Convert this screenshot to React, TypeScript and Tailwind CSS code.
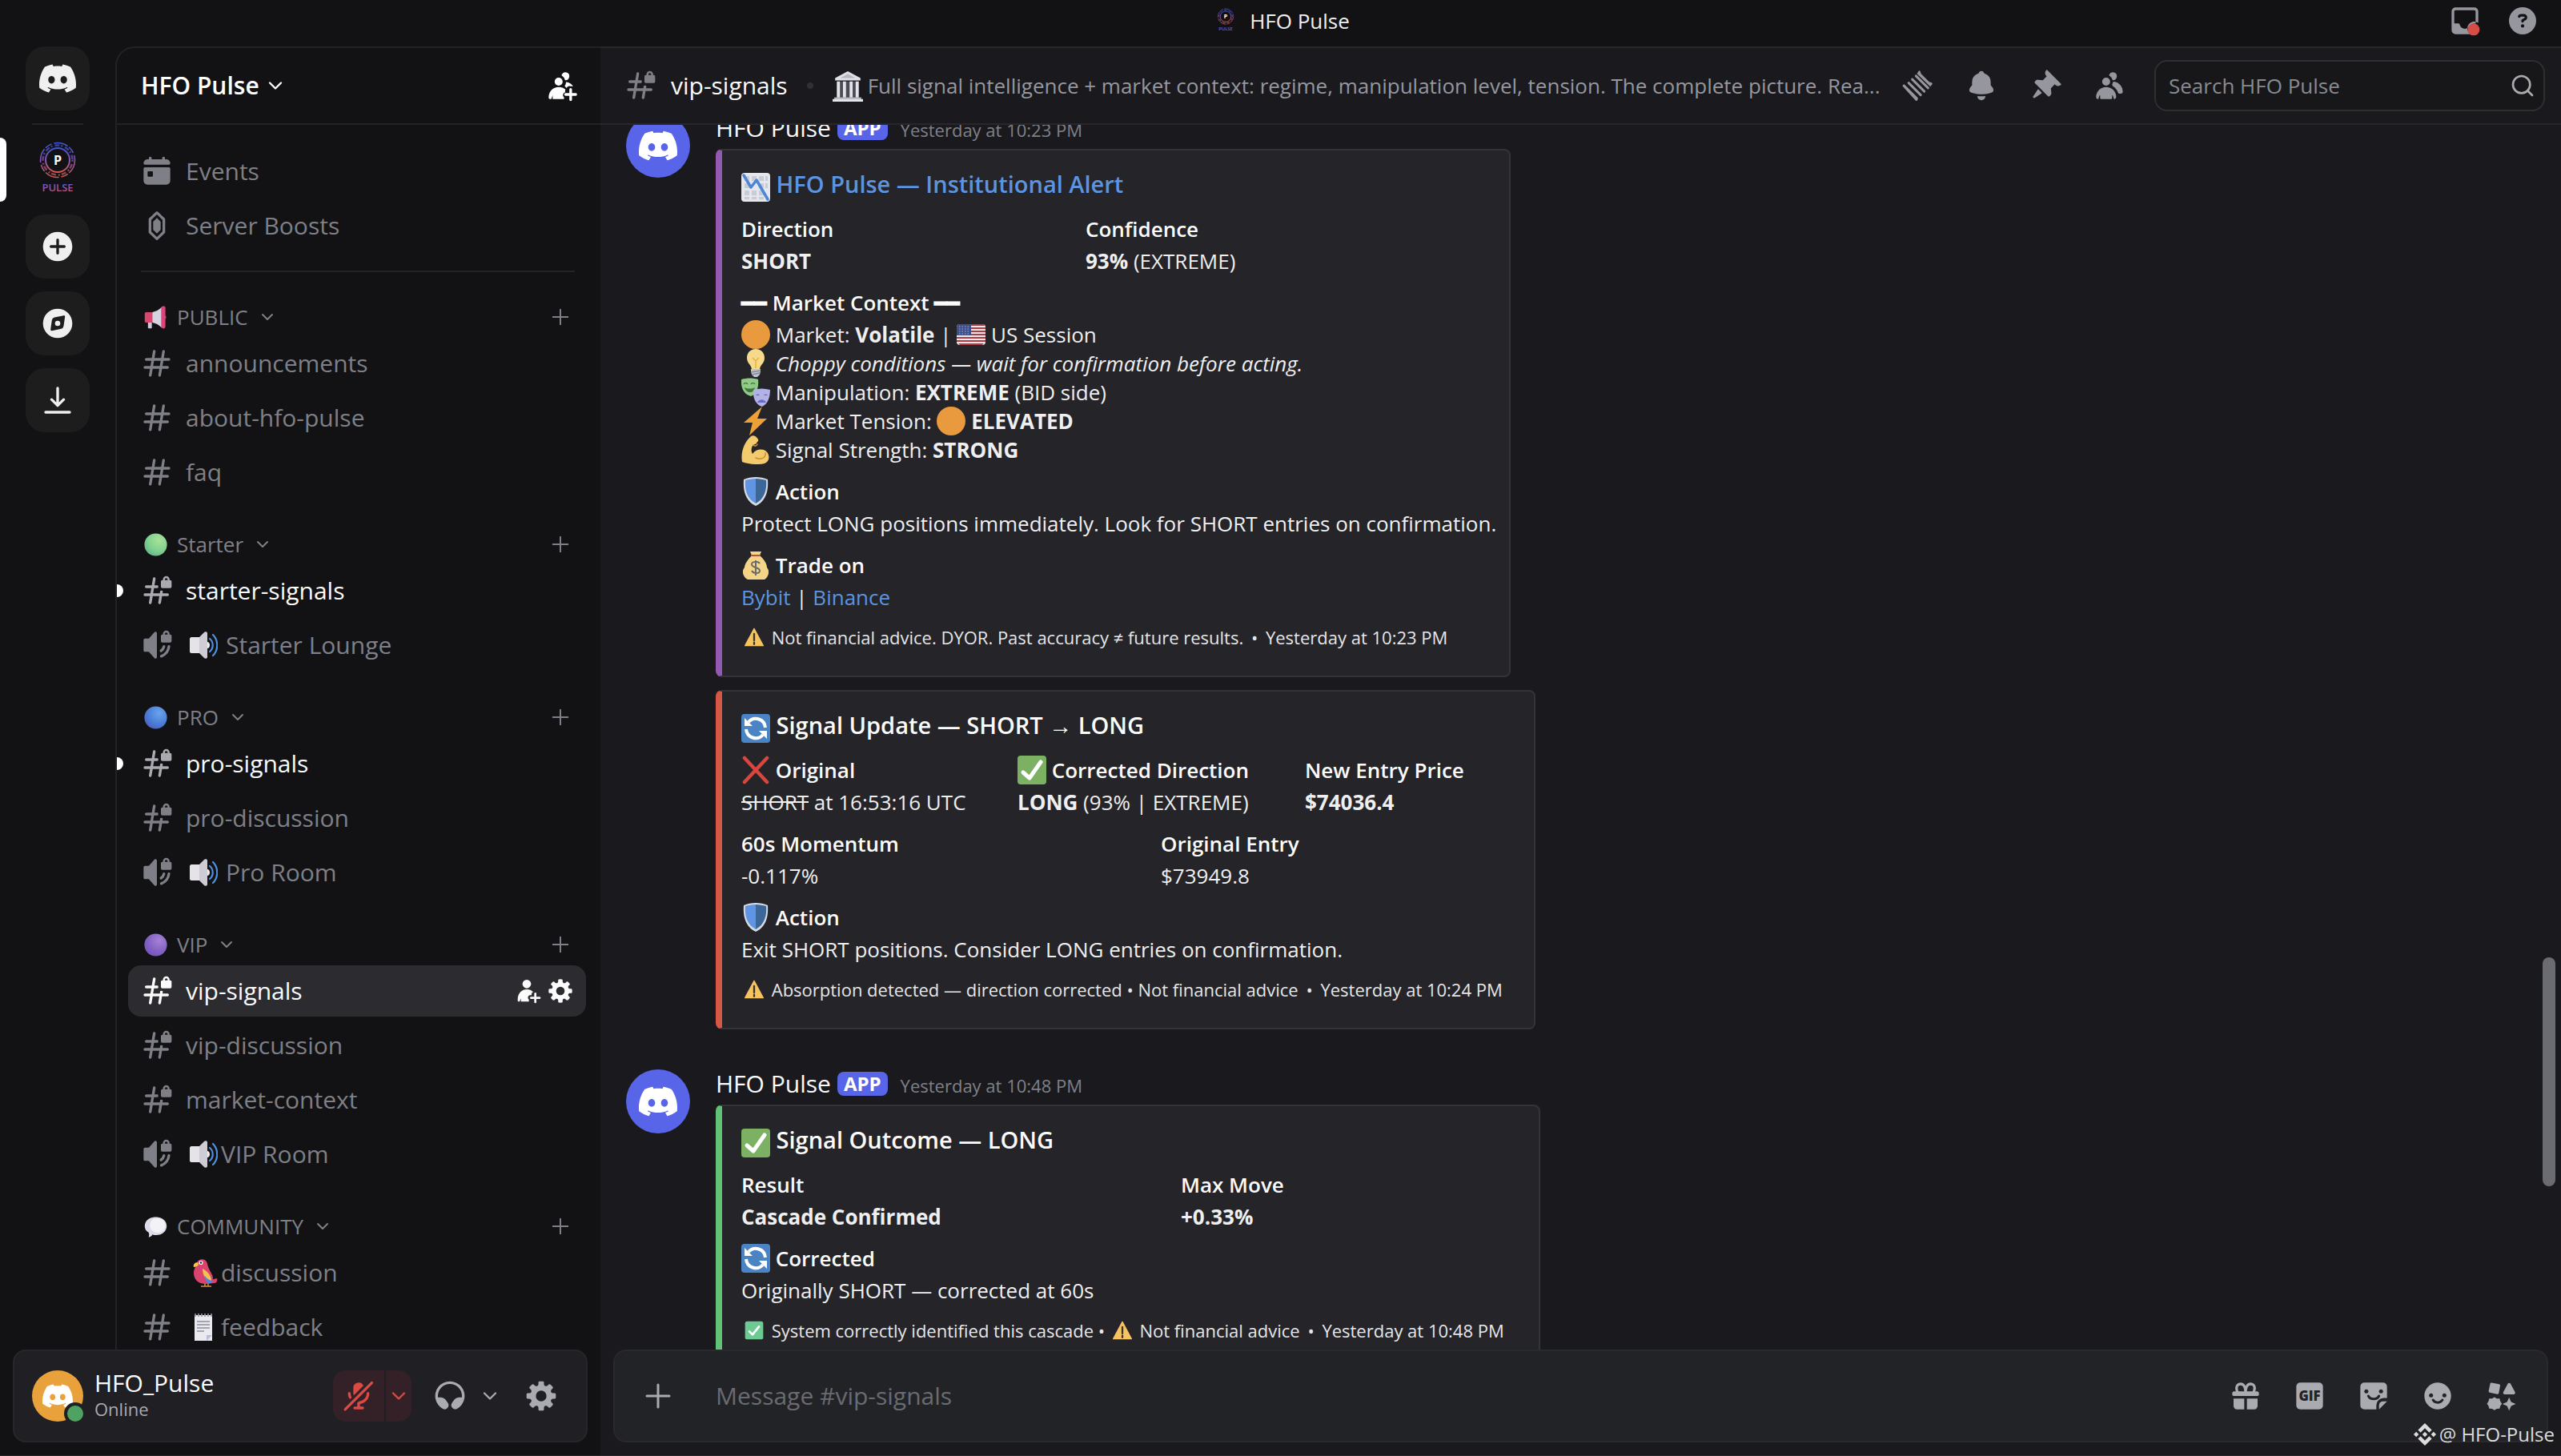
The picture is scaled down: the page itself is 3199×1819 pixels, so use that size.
import React from 'react';
import { FaCircleQuestion } from 'react-icons/fa6';
import { SiBinance, SiDiscord } from 'react-icons/si';
import { ChevronDown, Plus, Search } from 'lucide-react';

type EmojiName =
  | 'megaphone' | 'green' | 'blue' | 'purple' | 'orange' | 'bubble' | 'speaker' | 'parrot' | 'notepad'
  | 'temple' | 'chart' | 'flag' | 'bulb' | 'masks' | 'bolt' | 'muscle' | 'shield' | 'moneybag'
  | 'warning' | 'refresh' | 'cross' | 'check' | 'mint';

interface Channel {
  name: string;
  kind: 'hash' | 'lockedHash' | 'lockedVoice';
  emoji?: EmojiName;
  spaced?: boolean;
  unread?: boolean;
  active?: boolean;
}

interface Category {
  name: string;
  emoji: EmojiName;
  channels: Channel[];
}

const categories: Category[] = [
  {
    name: 'PUBLIC',
    emoji: 'megaphone',
    channels: [
      { name: 'announcements', kind: 'hash' },
      { name: 'about-hfo-pulse', kind: 'hash' },
      { name: 'faq', kind: 'hash' },
    ],
  },
  {
    name: 'Starter',
    emoji: 'green',
    channels: [
      { name: 'starter-signals', kind: 'lockedHash', unread: true },
      { name: 'Starter Lounge', kind: 'lockedVoice', emoji: 'speaker', spaced: true },
    ],
  },
  {
    name: 'PRO',
    emoji: 'blue',
    channels: [
      { name: 'pro-signals', kind: 'lockedHash', unread: true },
      { name: 'pro-discussion', kind: 'lockedHash' },
      { name: 'Pro Room', kind: 'lockedVoice', emoji: 'speaker', spaced: true },
    ],
  },
  {
    name: 'VIP',
    emoji: 'purple',
    channels: [
      { name: 'vip-signals', kind: 'lockedHash', active: true },
      { name: 'vip-discussion', kind: 'lockedHash' },
      { name: 'market-context', kind: 'lockedHash' },
      { name: 'VIP Room', kind: 'lockedVoice', emoji: 'speaker' },
    ],
  },
  {
    name: 'COMMUNITY',
    emoji: 'bubble',
    channels: [
      { name: 'discussion', kind: 'hash', emoji: 'parrot' },
      { name: 'feedback', kind: 'hash', emoji: 'notepad' },
    ],
  },
];

const ball = (id: string, light: string, mid: string, dark: string) => (
  <>
    <defs>
      <radialGradient id={id} cx="0.65" cy="0.3" r="0.8">
        <stop offset="0" stopColor={light} />
        <stop offset="0.6" stopColor={mid} />
        <stop offset="1" stopColor={dark} />
      </radialGradient>
    </defs>
    <circle cx="18" cy="18" r="17.5" fill={`url(#${id})`} />
  </>
);

const emojiArt: Record<EmojiName, React.ReactNode> = {
  green: ball('ball-green', '#a8e29a', '#7fd18f', '#5fb389'),
  blue: ball('ball-blue', '#6ba3ec', '#4a7fd8', '#4a5cc4'),
  purple: ball('ball-purple', '#a583d6', '#8462c4', '#7350c0'),
  orange: <circle cx="18" cy="18" r="18" fill="#ea9a3e" />,
  megaphone: (
    <>
      <path d="M32 15c3 0 3 6 0 6z" fill="#6b6780" />
      <path d="M6 22h6v12a1 1 0 0 1-1 1H7a1 1 0 0 1-1-1z" fill="#c9c6dc" />
      <rect x="1" y="10" width="13" height="16" rx="2" fill="#d8456f" />
      <path d="M13 10c5-1 11-4 14-8v32c-3-4-9-7-14-8z" fill="#d5d3e2" />
      <path d="M27 3c0-3 6-3 6 0v30c0 3-6 3-6 0z" fill="#e2427a" />
    </>
  ),
  bubble: (
    <>
      <path d="M18 3c10 0 17 6 17 14s-7 14-16 14c-2 0-4 0-6-1-1 2-3 4-6 4 1-2 1-5 0-7-4-2-6-6-6-10C1 9 8 3 18 3z" fill="#dcdcea" />
      <path d="M20 5c8 0 13 5 13 11s-5 11-12 11S9 22 9 16 13 5 20 5z" fill="#f3f3f7" />
    </>
  ),
  speaker: (
    <>
      <path d="M1 10c0-1 1-2 2-2h10v20H3c-1 0-2-1-2-2z" fill="#e6e3e8" />
      <path d="M13 8l6-6c1-1 4-1 4 1v30c0 2-3 2-4 1l-6-6z" fill="#cfccd6" />
      <path d="M23 14c4 0 4 8 0 8z" fill="#efeef2" />
      <path d="M26 10c5 4 5 12 0 16M30 5c7 7 7 19 0 26" fill="none" stroke="#4f8fe0" strokeWidth="2.2" strokeLinecap="round" />
    </>
  ),
  parrot: (
    <>
      <path d="M20 31v4M24 31v4M15 35h13" stroke="#d58a3a" strokeWidth="1.6" />
      <path d="M22 28l13-3c1 4-1 6-4 6l-9 1z" fill="#dd3f67" />
      <path d="M10 6c1-6 12-7 13 1 1 6 6 12 7 17 0 5-4 8-9 8C11 32 6 26 6 18c0-5 3-7 4-12z" fill="#d9446f" />
      <path d="M17 13c6 3 11 9 11 15-6 0-11-6-11-15z" fill="#f2c14f" />
      <path d="M20 22c3 4 6 6 10 6 0 2-3 4-6 3-3-2-4-5-4-9z" fill="#4a86dd" />
      <path d="M11 5c-4 0-6 3-5 6 2 0 5-1 6-3z" fill="#f4c54c" />
      <circle cx="15" cy="5.5" r="2.6" fill="#f7f0f4" />
      <circle cx="15" cy="5.5" r="1.2" fill="#222" />
    </>
  ),
  notepad: (
    <>
      <path d="M7 3h22v32H7z" fill="#e9e9ef" />
      <path d="M22 35v-7h7z" fill="#b9bcd6" />
      <path d="M8 1v4M12 1v4M16 1v4M20 1v4M24 1v4M28 1v4" stroke="#9a9aa4" strokeWidth="1.6" />
      <path d="M10 11h16M10 15h16M10 19h16M10 23h9" stroke="#8c8e9c" strokeWidth="1.3" />
    </>
  ),
  temple: (
    <>
      <path d="M18 0l15 8v3H3V8z" fill="#dfe1e6" />
      <path d="M18 3l9 5H9z" fill="#b4b8c2" />
      <path d="M5 12h4v19H5zM12 12h4v19h-4zM20 12h4v19h-4zM27 12h4v19h-4z" fill="#e3e4ea" />
      <path d="M9 12h3v19H9zM16 12h4v19h-4zM24 12h3v19h-3z" fill="#4a4b57" />
      <path d="M2 31h32v2H2z" fill="#c6c9d1" />
      <path d="M0 33h36v3H0z" fill="#e3e5ea" />
    </>
  ),
  chart: (
    <>
      <rect width="36" height="36" rx="4" fill="#e5e7ed" />
      <path d="M4 4h6v6H4zM13 4h6v6h-6zM22 4h6v6h-6zM30 4h3v6h-3zM4 13h6v6H4zM22 13h6v6h-6zM30 13h3v6h-3zM4 22h6v6H4zM13 22h6v6h-6zM22 22h6v6h-6zM4 30h6v3H4zM13 30h6v3h-6zM22 30h6v3h-6z" fill="#c8ccd6" />
      <path d="M3 3l9 15 7-9 14 24" fill="none" stroke="#4d86d6" strokeWidth="3.5" strokeLinejoin="round" strokeLinecap="round" />
    </>
  ),
  flag: (
    <>
      <rect y="5" width="36" height="26" rx="4" fill="#eceaea" />
      <path d="M2 5h32l1 2H1zM0 9h36v2H0zM0 13h36v2H0zM0 17h36v2H0zM0 21h36v2H0zM0 25h36v2H0zM2 29h32l-2 2H4z" fill="#b23a43" />
      <path d="M4 5h14v14H0V9a4 4 0 0 1 4-4z" fill="#3f4f8c" />
      <path d="M3 8h13M3 11h13M3 14h13M3 17h13" stroke="#a4aecb" strokeWidth="1.2" strokeDasharray="1.5 2" />
    </>
  ),
  bulb: (
    <>
      <path d="M18 0c7 0 11 5 11 11 0 7-5 8-6 14H13C12 19 7 18 7 11 7 5 11 0 18 0z" fill="#f7d98a" />
      <path d="M14 11l4 4 4-4M18 15v9" fill="none" stroke="#e9b23f" strokeWidth="1.5" />
      <path d="M12 25h12v3l-1 4-3 3h-4l-3-3-1-4z" fill="#bfc4cf" />
      <path d="M12 29l12-2M13 32l10-2" stroke="#858b99" strokeWidth="1.3" />
    </>
  ),
  masks: (
    <>
      <path d="M0 2c7-2 15-2 21 0 1 10-2 18-9 21C3 21-1 12 0 2z" fill="#8fcb86" />
      <path d="M3 8c1-2 4-2 5 0M12 8c1-2 4-2 5 0" fill="none" stroke="#4b7d47" strokeWidth="1.5" />
      <path d="M4 12c4 2 9 2 13 0-1 4-3 6-6 6s-6-2-7-6z" fill="#47713f" />
      <path d="M15 15c7-2 14-2 21 0 0 9-3 18-10 21-8-2-12-11-11-21z" fill="#b3b2e6" />
      <path d="M18 22c1-2 4-2 5 0M28 22c1-2 4-2 5 0M20 31c2-5 9-5 11 0z" fill="#6f6abf" />
    </>
  ),
  bolt: <path d="M26 0L3 20h11l-4 16 22-21H20z" fill="#eda036" />,
  muscle: (
    <>
      <path d="M12 1c3-2 7 0 9 4 1 3-2 3-2 5l-4 2c-3 3-3 8-1 11 5-7 15-7 19-1 3 6 1 11-4 13-8 2-20 1-28-2C-1 22 3 9 12 1z" fill="#f4cb6c" />
      <path d="M30 22c1 6-6 9-12 6M15 12c2 2 4 1 5-1" fill="none" stroke="#cf8e33" strokeWidth="1.6" strokeLinecap="round" />
    </>
  ),
  shield: (
    <>
      <path d="M18 0c5 0 11 1 15 3 1 14-2 27-15 33C5 30 2 17 3 3 7 1 13 0 18 0z" fill="#d6dae2" />
      <path d="M18 2v31C7 27 4 16 5 4c4-1 8-2 13-2z" fill="#5f95e2" />
      <path d="M18 2v31c11-6 14-17 13-29-4-1-8-2-13-2z" fill="#3c6799" />
    </>
  ),
  moneybag: (
    <>
      <path d="M11 1h14l-2 5c6 5 9 11 9 15 4 4 2 12-3 15H8C2 33 0 25 4 21c0-4 4-10 9-15z" fill="#f4d588" />
      <path d="M12 5h12v2H12z" fill="#b5503c" />
      <path d="M23 16c-2-3-10-3-10 1 0 5 10 3 10 8 0 4-8 4-10 0M18 12v19" fill="none" stroke="#6b6a6a" strokeWidth="2" />
    </>
  ),
  warning: (
    <>
      <path d="M18 2l17 32H1z" fill="#f5c35f" stroke="#f5c35f" strokeWidth="2" strokeLinejoin="round" />
      <path d="M18 12v12M18 28v3" stroke="#3a3328" strokeWidth="3.5" strokeLinecap="round" />
    </>
  ),
  refresh: (
    <>
      <rect width="36" height="36" rx="4" fill="#4a84c4" />
      <path d="M30 17A12 12 0 0 0 9 10M6 19a12 12 0 0 0 21 7" fill="none" stroke="#fff" strokeWidth="4" />
      <path d="M4 5v10h10zM32 31V21H22z" fill="#fff" />
    </>
  ),
  cross: <path d="M4 3l28 30M32 3L4 33" stroke="#d9463f" strokeWidth="4.5" strokeLinecap="round" />,
  check: (
    <>
      <rect width="36" height="36" rx="4" fill="#7cb163" />
      <path d="M7 21l8 7L29 8" fill="none" stroke="#fff" strokeWidth="5" strokeLinecap="round" strokeLinejoin="round" />
    </>
  ),
  mint: (
    <>
      <rect x="1" y="1" width="34" height="34" rx="4" fill="#6ccb92" />
      <path d="M9 20l6 6L27 11" fill="none" stroke="#fff" strokeWidth="4" strokeLinecap="round" strokeLinejoin="round" />
    </>
  ),
};

const Emoji: React.FC<{ name: EmojiName; className?: string }> = ({
  name,
  className = 'inline-block size-9 align-bottom',
}) => (
  <svg viewBox="0 0 36 36" className={className} aria-hidden="true">
    {emojiArt[name]}
  </svg>
);

const Icon: React.FC<{ className?: string; children: React.ReactNode }> = ({
  className = 'size-10 shrink-0',
  children,
}) => (
  <svg viewBox="0 0 24 24" fill="currentColor" fillRule="evenodd" className={className} aria-hidden="true">
    {children}
  </svg>
);

const LOCK =
  'M16 4h.5v-.5a2.5 2.5 0 0 1 5 0V4h.5a1 1 0 0 1 1 1v4a1 1 0 0 1-1 1h-6a1 1 0 0 1-1-1V5a1 1 0 0 1 1-1Zm4-.5V4h-2v-.5a1 1 0 1 1 2 0Z';

const GEAR =
  'M10.56 1.1c-.46.05-.7.53-.64.98.18 1.16-.19 2.2-.98 2.53-.8.33-1.79-.15-2.49-1.1-.27-.36-.78-.52-1.14-.24-.77.59-1.45 1.27-2.04 2.04-.28.36-.12.87.24 1.14.96.7 1.43 1.7 1.1 2.49-.33.8-1.37 1.16-2.53.98-.45-.07-.93.18-.99.64a11.1 11.1 0 0 0 0 2.88c.06.46.54.7.99.64 1.16-.18 2.2.19 2.53.98.33.8-.14 1.79-1.1 2.49-.36.27-.52.78-.24 1.14.59.77 1.27 1.45 2.04 2.04.36.28.87.12 1.14-.24.7-.95 1.7-1.43 2.49-1.1.8.33 1.16 1.37.98 2.53-.07.45.18.93.64.99a11.1 11.1 0 0 0 2.88 0c.46-.06.7-.54.64-.99-.18-1.16.19-2.2.98-2.53.8-.33 1.79.14 2.49 1.1.27.36.78.52 1.14.24.77-.59 1.45-1.27 2.04-2.04.28-.36.12-.87-.24-1.14-.96-.7-1.43-1.7-1.1-2.49.33-.8 1.37-1.16 2.53-.98.45.07.93-.18.99-.64a11.1 11.1 0 0 0 0-2.88c-.06-.46-.54-.7-.99-.64-1.16.18-2.2-.19-2.53-.98-.33-.8.14-1.79 1.1-2.49.36-.27.52-.78.24-1.14a11.07 11.07 0 0 0-2.04-2.04c-.36-.28-.87-.12-1.14.24-.7.96-1.7 1.43-2.49 1.1-.8-.33-1.16-1.37-.98-2.53.07-.45-.18-.93-.64-.99a11.1 11.1 0 0 0-2.88 0ZM16 12a4 4 0 1 1-8 0 4 4 0 0 1 8 0Z';

const HashIcon = () => (
  <Icon>
    <path d="M10.99 3.16A1 1 0 1 0 9 2.84L8.15 8H4a1 1 0 0 0 0 2h3.82l-.67 4H3a1 1 0 1 0 0 2h3.82l-.8 4.84a1 1 0 0 0 1.97.32L8.85 16h4.97l-.8 4.84a1 1 0 0 0 1.97.32l.86-5.16H20a1 1 0 1 0 0-2h-3.82l.67-4H21a1 1 0 1 0 0-2h-3.82l.8-4.84a1 1 0 1 0-1.97-.32L15.15 8h-4.97l.8-4.84ZM14.15 14l.67-4H9.85l-.67 4h4.97Z" />
  </Icon>
);

const LockedHashIcon = () => (
  <Icon>
    <path d={LOCK} />
    <path d="M12.5 8c.28 0 .5.22.5.5V9c0 .1 0 .2.02.31.03.34-.21.69-.56.69H9.85l-.67 4h4.97l.28-1.68c.06-.34.44-.52.77-.43a3 3 0 0 0 .8.11c.27 0 .47.24.43.5l-.25 1.5H20a1 1 0 1 1 0 2h-4.15l-.86 5.16a1 1 0 0 1-1.98-.32l.8-4.84H8.86l-.86 5.16A1 1 0 0 1 6 20.84L6.82 16H3a1 1 0 1 1 0-2h4.15l.67-4H4a1 1 0 1 1 0-2h4.15l.86-5.16a1 1 0 1 1 1.98.32L10.19 8h2.31Z" />
  </Icon>
);

const LockedVoiceIcon = () => (
  <Icon>
    <path d={LOCK} />
    <path d="M12 3a1 1 0 0 0-1-1h-.06a1 1 0 0 0-.74.32L5.92 7H3a1 1 0 0 0-1 1v8a1 1 0 0 0 1 1h2.92l4.28 4.68a1 1 0 0 0 .74.32H11a1 1 0 0 0 1-1V3Z" />
    <path d="M21 13a9 9 0 0 1-5.7 7.3M17.3 13a5 5 0 0 1-2.2 3.2" fill="none" stroke="currentColor" strokeWidth="2" strokeLinecap="round" />
  </Icon>
);

const channelIcons = { hash: HashIcon, lockedHash: LockedHashIcon, lockedVoice: LockedVoiceIcon };

const PersonPlusIcon: React.FC<{ className?: string }> = ({ className }) => (
  <Icon className={className}>
    <circle cx="10.5" cy="5.5" r="4" />
    <path d="M2 20c0-6 4-9.5 8.5-9.5 2.5 0 4.5.9 6 2.5-.9.3-1.5 1-1.5 2.2V16h-1a2.2 2.2 0 0 0-1.5 4v2H5v-3l-1.2 3H3a1 1 0 0 1-1-1z" />
    <path d="M18.5 14.5v8M14.5 18.5h8" fill="none" stroke="currentColor" strokeWidth="2" strokeLinecap="round" />
  </Icon>
);

const PeoplePlusIcon = () => (
  <Icon>
    <path d="M14.5 8a3 3 0 1 0-2.7-4.3c-.2.4.06.86.44 1.12a5 5 0 0 1 2.14 3.08c.01.06.06.1.12.1Z" />
    <circle cx="9.5" cy="9" r="3" />
    <path d="M15 9.3c2.5.3 4.2 1.4 5.3 3-1 .2-2 .2-2.7 0-1.2.2-1.9.8-2.2 1.5a8 8 0 0 0-1.4-1.5c.6-.8 1-1.9 1-3z" />
    <path d="M2 21c0-5 3.400-8 7.500-8 2 0 3.800.7 5.100 1.900-.4.800-.3 1.600-.1 2.100a2.100 2.100 0 0 0-1 3.700V22H5v-2.800L4 22H3a1 1 0 0 1-1-1z" />
    <path d="M18.5 14.8v7.7M14.7 18.6h7.6" fill="none" stroke="currentColor" strokeWidth="2" strokeLinecap="round" />
  </Icon>
);

const ThreadsIcon = () => (
  <Icon>
    <path d="M1 12.5c-.3-.8.6-1.8 1.5-1.3l9.8 9.8c.6 1-.6 3-1.5 2.3zM13.2.8c.8-.4 1.3 1 1.5 2.200L21 9.300c1.200.2 2.600.7 2.200 1.500l-1.500 2L11.700 3z" />
    <path d="M5.500 10l9 9M8.200 7.300l9 9M11 4.700l9 9" fill="none" stroke="currentColor" strokeWidth="1.800" strokeLinecap="round" />
  </Icon>
);

const PulseLogo: React.FC<{ className: string; id: string }> = ({ className, id }) => (
  <svg viewBox="0 0 80 80" className={className} aria-hidden="true">
    <defs>
      <linearGradient id={id} x1="0" y1="0" x2="0" y2="1">
        <stop offset="0" stopColor="#3f56d8" />
        <stop offset="0.5" stopColor="#8a55b8" />
        <stop offset="1" stopColor="#d2574f" />
      </linearGradient>
    </defs>
    <g fill="none" stroke={`url(#${id})`}>
      <circle cx="40" cy="28" r="21.5" strokeWidth="1.5" strokeDasharray="18 2 9 3" />
      <circle cx="40" cy="28" r="18.5" strokeWidth="2.5" strokeDasharray="2 3 6 2" opacity="0.7" />
      <circle cx="40" cy="28" r="15" strokeWidth="2" />
    </g>
    <text x="40" y="34" textAnchor="middle" fontSize="16" fontWeight="700" fill="#fff">P</text>
    <text x="40" y="67" textAnchor="middle" fontSize="13" fontWeight="600" fill={`url(#${id})`}>PULSE</text>
  </svg>
);

const TitleBar = () => (
  <header className="grid h-[58px] shrink-0 grid-cols-3 items-center px-7 pb-1.5">
    <div />
    <div className="flex items-center justify-center gap-3 text-[26px] leading-9 font-medium">
      <PulseLogo id="title-logo" className="size-9" />
      HFO Pulse
    </div>
    <div className="flex justify-end gap-8 text-[#96979e]">
      <button type="button" aria-label="Inbox">
        <Icon>
          <path d="M5 2h14a3 3 0 0 1 3 3v8.5a5 5 0 0 0-6 8.5H5a3 3 0 0 1-3-3V5a3 3 0 0 1 3-3Zm0 2a1 1 0 0 0-1 1v9h3c1 0 1 .5 1.3 1.5.5 1.5 2 2.5 3.700 2.500 1 0 2-.5 3-1.500.8-1.500 2.500-2.500 5-2.500V5a1 1 0 0 0-1-1Z" />
          <circle cx="18.5" cy="18.5" r="4.5" fill="#d84c48" />
        </Icon>
      </button>
      <button type="button" aria-label="Help" className="flex size-10 items-center justify-center">
        <FaCircleQuestion className="size-[34px]" />
      </button>
    </div>
  </header>
);

const railButton =
  'flex size-20 items-center justify-center rounded-3xl bg-[#1d1d1e] text-[#efeff0]';

const ServerRail = () => (
  <nav aria-label="Servers" className="flex w-36 shrink-0 flex-col items-center gap-4">
    <button type="button" aria-label="Direct Messages" className={railButton}>
      <SiDiscord className="size-[46px]" />
    </button>
    <div className="h-0.5 w-16 bg-[#242427]" />
    <div className="relative flex w-full justify-center">
      <span className="absolute top-0 left-0 h-20 w-2 rounded-r-lg bg-white" />
      <button type="button" aria-label="HFO Pulse">
        <PulseLogo id="rail-logo" className="size-20" />
      </button>
    </div>
    <button type="button" aria-label="Add a Server" className={railButton}>
      <Icon>
        <path d="M12 23a11 11 0 1 0 0-22 11 11 0 0 0 0 22Zm0-17a1 1 0 0 1 1 1v4h4a1 1 0 1 1 0 2h-4v4a1 1 0 1 1-2 0v-4H7a1 1 0 1 1 0-2h4V7a1 1 0 0 1 1-1Z" />
      </Icon>
    </button>
    <button type="button" aria-label="Discover" className={railButton}>
      <Icon>
        <path d="M12 23a11 11 0 1 0 0-22 11 11 0 0 0 0 22Zm4.5-16.9c.6-.2 1.1.3 1 1l-1 6.8a2.5 2.5 0 0 1-1.9 2.1l-6.8 1.5c-.7.1-1.2-.4-1.1-1l1-6.9a2.5 2.5 0 0 1 1.9-2.1ZM12 14a2 2 0 1 0 0-4 2 2 0 0 0 0 4Z" />
      </Icon>
    </button>
    <button type="button" aria-label="Download Apps" className={railButton}>
      <Icon>
        <path d="M12 3v13M7.5 11.5 12 16l4.5-4.5M3 21h18" fill="none" stroke="currentColor" strokeWidth="2" strokeLinecap="round" strokeLinejoin="round" />
      </Icon>
    </button>
  </nav>
);

const ChannelRow: React.FC<{ channel: Channel }> = ({ channel }) => {
  const ChannelIcon = channelIcons[channel.kind];
  const bright = channel.unread || channel.active;
  return (
    <li className="relative py-0.5 pr-[18px] pl-3.5">
      {channel.unread && (
        <span className="absolute top-[26px] left-0 h-4 w-2 rounded-r-full bg-white" />
      )}
      <div className={`flex h-16 items-center rounded-2xl px-4 ${channel.active ? 'bg-[#2b2b30]' : ''}`}>
        <a
          href="#"
          className={`flex flex-1 items-center gap-4 ${bright ? 'font-medium text-[#fbfbfb]' : 'text-[#7f8087]'}`}
        >
          <span className={channel.unread ? 'text-[#aaaab1]' : ''}>
            <ChannelIcon />
          </span>
          <span className="flex items-center">
            {channel.emoji && (
              <Emoji name={channel.emoji} className={`ml-1 size-9 ${channel.spaced ? 'mr-2.5' : 'mr-1'}`} />
            )}
            {channel.name}
          </span>
        </a>
        {channel.active && (
          <div className="flex gap-2 text-[#fbfbfb]">
            <button type="button" aria-label="Create Invite"><PersonPlusIcon className="size-8" /></button>
            <button type="button" aria-label="Edit Channel">
              <Icon className="size-8"><path d={GEAR} /></Icon>
            </button>
          </div>
        )}
      </div>
    </li>
  );
};

const Sidebar = () => (
  <aside className="flex min-w-0 flex-1 flex-col rounded-tl-3xl border-t-2 border-l-2 border-[#222225]">
    <div className="flex h-24 shrink-0 items-center justify-between border-b-2 border-[#222225] pr-7 pl-[30px]">
      <button type="button" className="flex items-center gap-1.5 font-semibold text-white">
        HFO Pulse
        <ChevronDown className="size-7" />
      </button>
      <button type="button" aria-label="Invite to Server" className="text-white"><PeoplePlusIcon /></button>
    </div>
    <div className="min-h-0 flex-1 overflow-hidden pt-6">
      <ul className="text-[#7f8087]">
        <li className="py-0.5 pl-[30px]">
          <a href="#" className="flex h-16 items-center gap-4">
            <Icon>
              <path d="M7 1a1 1 0 0 1 1 1v.75c0 .14.11.25.25.25h7.5c.14 0 .25-.11.25-.25V2a1 1 0 1 1 2 0v.75c0 .14.11.25.25.25H19a3 3 0 0 1 3 3 1 1 0 0 1-1 1H3a1 1 0 0 1-1-1 3 3 0 0 1 3-3h.75c.14 0 .25-.11.25-.25V2a1 1 0 0 1 1-1Z" />
              <path d="M2 10a1 1 0 0 1 1-1h18a1 1 0 0 1 1 1v9a3 3 0 0 1-3 3H5a3 3 0 0 1-3-3v-9Zm3.5 2a.5.5 0 0 0-.5.5v3c0 .28.22.5.5.5h3a.5.5 0 0 0 .5-.5v-3a.5.5 0 0 0-.5-.5h-3Z" />
            </Icon>
            Events
          </a>
        </li>
        <li className="py-0.5 pl-[30px]">
          <a href="#" className="flex h-16 items-center gap-4">
            <Icon>
              <path d="M12 2.2 17.2 7.2v9.6L12 21.8 6.8 16.8V7.2Z" fill="none" stroke="currentColor" strokeWidth="2" strokeLinejoin="round" />
              <path d="M12 6.2 14.800 9v6L12 17.800 9.200 15V9Z" />
            </Icon>
            Server Boosts
          </a>
        </li>
      </ul>
      <div className="mt-[22px] mr-8 ml-[30px] h-0.5 bg-[#242427]" />
      {categories.map((category) => (
        <section key={category.name}>
          <h2 className="flex h-20 items-center pt-8 pr-[34px] pl-[34px] text-[26px] leading-9 text-[#7f8087]">
            <button type="button" className="flex flex-1 items-center">
              <Emoji name={category.emoji} className="mr-3 size-[29px]" />
              {category.name}
              <ChevronDown className="ml-3 size-6" />
            </button>
            <button type="button" aria-label={`Create channel in ${category.name}`}>
              <Plus className="size-8" strokeWidth={1.5} />
            </button>
          </h2>
          <ul>
            {category.channels.map((channel) => (
              <ChannelRow key={channel.name} channel={channel} />
            ))}
          </ul>
        </section>
      ))}
    </div>
  </aside>
);

const UserPanel = () => (
  <div className="mx-4 mb-4 flex h-[116px] shrink-0 items-center rounded-2xl border-2 border-[#27272b] bg-[#202024] pr-9 pl-[22px]">
    <div className="relative flex size-16 items-center justify-center rounded-full bg-[#e9a13b]">
      <SiDiscord className="size-[38px] text-white" />
      <span className="absolute -right-1 -bottom-1 size-7 rounded-full border-4 border-[#202024] bg-[#4ea363]" />
    </div>
    <div className="ml-3.5 flex-1 pb-1">
      <div className="leading-9 font-medium text-[#fbfbfb]">HFO_Pulse</div>
      <div className="text-[22px] leading-7 text-[#aaaab1]">Online</div>
    </div>
    <div className="flex h-16 gap-0.5 text-[#dc4a44]">
      <button type="button" aria-label="Unmute" className="flex w-16 items-center justify-center rounded-l-2xl bg-[#332127]">
        <Icon>
          <path d="m2.7 22.7 20-20a1 1 0 0 0-1.4-1.4l-20 20a1 1 0 1 0 1.4 1.4ZM10.8 17.32c-.21.21-.1.58.2.62V20H9a1 1 0 1 0 0 2h6a1 1 0 1 0 0-2h-2v-2.06A8 8 0 0 0 20 10a1 1 0 0 0-2 0c0 1.45-.52 2.79-1.38 3.83l-.02.02A5.99 5.99 0 0 1 12.32 16a.52.52 0 0 0-.34.15l-1.18 1.18ZM15.36 4.52c.15-.15.19-.38.08-.56A4 4 0 0 0 8 6v4c0 .3.03.58.1.86.07.34.49.43.74.18l6.52-6.52ZM5.06 13.98c.16.28.53.31.75.09l.75-.75c.16-.16.19-.4.08-.61A5.97 5.97 0 0 1 6 10a1 1 0 0 0-2 0c0 1.45.39 2.81 1.06 3.98Z" />
        </Icon>
      </button>
      <button type="button" aria-label="Input options" className="flex w-8 items-center justify-center rounded-r-2xl bg-[#332127]">
        <ChevronDown className="size-7" />
      </button>
    </div>
    <div className="ml-7 flex items-center text-[#aaaab1]">
      <button type="button" aria-label="Deafen">
        <Icon>
          <path d="M12 3a9 9 0 0 0-8.95 10h1.87a5 5 0 0 1 4.1 2.13l1.37 1.97a3.1 3.1 0 0 1-.17 3.78 2.85 2.85 0 0 1-3.55.74 11 11 0 1 1 10.66 0c-1.27.71-2.73.23-3.55-.74a3.1 3.1 0 0 1-.17-3.78l1.38-1.97a5 5 0 0 1 4.1-2.13h1.86A9 9 0 0 0 12 3Z" />
        </Icon>
      </button>
      <button type="button" aria-label="Output options" className="ml-4"><ChevronDown className="size-7" /></button>
      <button type="button" aria-label="User Settings" className="ml-[30px]">
        <Icon><path d={GEAR} /></Icon>
      </button>
    </div>
  </div>
);

const ChannelHeader = () => (
  <div className="flex h-24 shrink-0 items-center border-b-2 border-[#28282c] pr-5 pl-[30px]">
    <span className="mr-[18px] text-[#7f8087]"><LockedHashIcon /></span>
    <h1 className="font-medium text-[#fbfbfb]">vip-signals</h1>
    <span className="mx-6 size-2 shrink-0 rounded-full bg-[#313135]" />
    <p className="min-w-0 flex-1 overflow-hidden text-[26px] leading-10 whitespace-nowrap text-[#96979e]">
      <Emoji name="temple" className="mr-1.5 inline-block size-[38px] align-bottom" />
      Full signal intelligence + market context: regime, manipulation level, tension. The complete picture. Rea...
    </p>
    <div className="mr-9 ml-4 flex gap-10 text-[#96979e]">
      <button type="button" aria-label="Threads"><ThreadsIcon /></button>
      <button type="button" aria-label="Notification Settings">
        <Icon>
          <path d="M9.7 2.89c.18-.07.32-.24.37-.43a2 2 0 0 1 3.86 0c.05.2.19.36.38.43A7 7 0 0 1 19 9.5v2.09c0 .12.05.24.13.33l1.1 1.22a3 3 0 0 1 .77 2.01v.28c0 .67-.34 1.29-.95 1.56-1.31.6-4 1.51-8.05 1.51-4.05 0-6.74-.91-8.05-1.5-.61-.28-.95-.9-.95-1.57v-.28a3 3 0 0 1 .77-2l1.1-1.23a.5.5 0 0 0 .13-.33V9.5a7 7 0 0 1 4.7-6.61ZM9.18 19.84A.16.16 0 0 0 9 20a3 3 0 1 0 6 0c0-.1-.09-.17-.18-.16a24.86 24.86 0 0 1-5.64 0Z" />
        </Icon>
      </button>
      <button type="button" aria-label="Pinned Messages">
        <Icon>
          <path d="M19.38 11.38a3 3 0 0 0 4.24 0l.03-.03a.5.5 0 0 0 0-.7L13.35.35a.5.5 0 0 0-.7 0l-.03.03a3 3 0 0 0 0 4.24L13 5l-2.92 2.92-3.65-.34a2 2 0 0 0-1.6.58l-.62.63a1 1 0 0 0 0 1.42l9.58 9.58a1 1 0 0 0 1.42 0l.63-.63a2 2 0 0 0 .58-1.6l-.34-3.64L19 11l.38.38ZM9.07 17.07a.5.5 0 0 1-.08.77l-5.15 3.43a.5.5 0 0 1-.63-.06l-.42-.42a.5.5 0 0 1-.06-.63L6.16 15a.5.5 0 0 1 .77-.08l2.14 2.14Z" />
        </Icon>
      </button>
      <button type="button" aria-label="Member List">
        <Icon>
          <path d="M14.5 8a3 3 0 1 0-2.7-4.3c-.2.4.06.86.44 1.12a5 5 0 0 1 2.14 3.08c.01.06.06.1.12.1ZM18.44 17.27c.15.43.54.73 1 .73h1.06c.83 0 1.5-.67 1.5-1.5a7.5 7.5 0 0 0-6.5-7.43c-.55-.08-.99.38-1.1.92-.06.3-.15.6-.26.87-.23.58-.05 1.3.47 1.63a9.53 9.53 0 0 1 3.83 4.78ZM12.5 9a3 3 0 1 1-6 0 3 3 0 0 1 6 0ZM2 20.5a7.5 7.5 0 0 1 15 0c0 .83-.67 1.5-1.5 1.5a.2.2 0 0 1-.2-.16c-.2-.96-.56-1.87-.88-2.54-.1-.23-.42-.15-.42.1v2.1a.5.5 0 0 1-.5.5h-8a.5.5 0 0 1-.5-.5v-2.1c0-.25-.31-.33-.42-.1-.32.67-.67 1.58-.88 2.54a.2.2 0 0 1-.2.16A1.5 1.5 0 0 1 2 20.5Z" />
        </Icon>
      </button>
    </div>
    <label className="flex h-16 w-[488px] shrink-0 items-center rounded-2xl border-2 border-[#2f2f33] bg-[#17171a] pr-2.5 pl-4">
      <input
        type="text"
        aria-label="Search"
        placeholder="Search HFO Pulse"
        className="min-w-0 flex-1 bg-transparent text-[26px] leading-9 placeholder:text-[#898a91] focus:outline-none"
      />
      <Search className="size-8 text-[#aaaab1]" />
    </label>
  </div>
);

interface Field {
  name: React.ReactNode;
  value: React.ReactNode;
}

interface EmbedProps {
  accent: string;
  width: string;
  title: React.ReactNode;
  rows: { columns: string; fields: Field[] }[];
  footer: React.ReactNode;
  time: string;
}

const FooterEmoji: React.FC<{ name: EmojiName }> = ({ name }) => (
  <Emoji name={name} className="mx-1 mb-1 inline-block size-6 align-bottom" />
);

const Embed: React.FC<EmbedProps> = ({ accent, width, title, rows, footer, time }) => (
  <article className={`max-w-full rounded-lg border-2 border-l-8 border-[#333338] bg-[#242429] px-6 pt-5 pb-8 ${accent} ${width}`}>
    <h3 className="text-[29px] leading-11 font-semibold whitespace-nowrap text-[#fbfbfb]">{title}</h3>
    {rows.map((row, i) => (
      <dl key={i} className={`mt-4 grid text-[26px] leading-9 whitespace-nowrap ${row.columns}`}>
        {row.fields.map((field, j) => (
          <div key={j}>
            <dt className="font-semibold text-[#fbfbfb]">{field.name}</dt>
            <dd className="mt-1">{field.value}</dd>
          </div>
        ))}
      </dl>
    ))}
    <footer className="mt-4 text-[22px] leading-8 font-medium whitespace-nowrap text-[#e6e6e8]">
      {footer} <span className="mx-1">•</span> {time}
    </footer>
  </article>
);

const Message: React.FC<{ time: string; children: React.ReactNode }> = ({ time, children }) => (
  <section className="flex gap-8 px-8">
    <div className="flex size-20 shrink-0 items-center justify-center rounded-full bg-[#5865e8] text-white">
      <SiDiscord className="size-12" />
    </div>
    <div className="min-w-0 flex-1">
      <div className="mb-2 flex items-center leading-9">
        <span className="font-medium text-[#fbfbfb]">HFO Pulse</span>
        <span className="ml-2 rounded-lg bg-[#5865e8] px-2 text-2xl leading-[30px] font-bold text-white">APP</span>
        <time className="ml-4 pt-1 text-[22px] leading-7 text-[#7f8087]">{time}</time>
      </div>
      <div className="flex flex-col gap-4">{children}</div>
    </div>
  </section>
);

const Chat = () => (
  <div className="relative min-h-0 flex-1 overflow-hidden">
    <div className="-mt-3.5 flex flex-col gap-[50px]">
      <Message time="Yesterday at 10:23 PM">
        <Embed
          accent="border-l-[#9358b0]"
          width="w-[993px]"
          title={
            <a href="#" className="text-[#5c94e0]">
              <Emoji name="chart" /> HFO Pulse — Institutional Alert
            </a>
          }
          rows={[
            {
              columns: 'grid-cols-[430px_1fr]',
              fields: [
                { name: 'Direction', value: <b>SHORT</b> },
                { name: 'Confidence', value: <><b>93%</b> (EXTREME)</> },
              ],
            },
            {
              columns: 'grid-cols-1',
              fields: [
                {
                  name: '━━ Market Context ━━',
                  value: (
                    <>
                      <div><Emoji name="orange" /> Market: <b>Volatile</b> | <Emoji name="flag" /> US Session</div>
                      <div><Emoji name="bulb" /> <i>Choppy conditions — wait for confirmation before acting.</i></div>
                      <div><Emoji name="masks" /> Manipulation: <b>EXTREME</b> (BID side)</div>
                      <div><Emoji name="bolt" /> Market Tension: <Emoji name="orange" /> <b>ELEVATED</b></div>
                      <div><Emoji name="muscle" /> Signal Strength: <b>STRONG</b></div>
                    </>
                  ),
                },
              ],
            },
            {
              columns: 'grid-cols-1',
              fields: [
                {
                  name: <><Emoji name="shield" /> Action</>,
                  value: 'Protect LONG positions immediately. Look for SHORT entries on confirmation.',
                },
              ],
            },
            {
              columns: 'grid-cols-1',
              fields: [
                {
                  name: <><Emoji name="moneybag" /> Trade on</>,
                  value: (
                    <>
                      <a href="#" className="text-[#5c94e0]">Bybit</a> | <a href="#" className="text-[#5c94e0]">Binance</a>
                    </>
                  ),
                },
              ],
            },
          ]}
          footer={
            <>
              <FooterEmoji name="warning" /> Not financial advice. DYOR. Past accuracy ≠ future results.
            </>
          }
          time="Yesterday at 10:23 PM"
        />
        <Embed
          accent="border-l-[#d65745]"
          width="w-[1024px]"
          title={<><Emoji name="refresh" /> Signal Update — SHORT → LONG</>}
          rows={[
            {
              columns: 'grid-cols-[345px_359px_1fr]',
              fields: [
                { name: <><Emoji name="cross" /> Original</>, value: <><s>SHORT</s> at 16:53:16 UTC</> },
                { name: <><Emoji name="check" /> Corrected Direction</>, value: <><b>LONG</b> (93% | EXTREME)</> },
                { name: 'New Entry Price', value: <b>$74036.4</b> },
              ],
            },
            {
              columns: 'grid-cols-[524px_1fr]',
              fields: [
                { name: '60s Momentum', value: '-0.117%' },
                { name: 'Original Entry', value: '$73949.8' },
              ],
            },
            {
              columns: 'grid-cols-1',
              fields: [
                {
                  name: <><Emoji name="shield" /> Action</>,
                  value: 'Exit SHORT positions. Consider LONG entries on confirmation.',
                },
              ],
            },
          ]}
          footer={
            <>
              <FooterEmoji name="warning" /> Absorption detected — direction corrected • Not financial advice
            </>
          }
          time="Yesterday at 10:24 PM"
        />
      </Message>
      <Message time="Yesterday at 10:48 PM">
        <Embed
          accent="border-l-[#5fc274]"
          width="w-[1030px]"
          title={<><Emoji name="check" /> Signal Outcome — LONG</>}
          rows={[
            {
              columns: 'grid-cols-[549px_1fr]',
              fields: [
                { name: 'Result', value: <b>Cascade Confirmed</b> },
                { name: 'Max Move', value: <b>+0.33%</b> },
              ],
            },
            {
              columns: 'grid-cols-1',
              fields: [
                { name: <><Emoji name="refresh" /> Corrected</>, value: 'Originally SHORT — corrected at 60s' },
              ],
            },
          ]}
          footer={
            <>
              <FooterEmoji name="mint" /> System correctly identified this cascade • <FooterEmoji name="warning" /> Not financial advice
            </>
          }
          time="Yesterday at 10:48 PM"
        />
      </Message>
    </div>
    <div className="absolute top-[68%] right-[7px] h-[286px] w-4 rounded-full bg-[#6b6c71]" />
  </div>
);

const MessageBox = () => (
  <div className="mx-4 mb-4 flex h-[116px] shrink-0 items-center rounded-2xl border-2 border-[#2a2a2e] bg-[#222327] pr-9 pl-[30px] text-[#aaaab1]">
    <button type="button" aria-label="Attach" className="mr-12">
      <Plus className="size-12" strokeWidth={1.5} />
    </button>
    <input
      type="text"
      aria-label="Message #vip-signals"
      placeholder="Message #vip-signals"
      className="min-w-0 flex-1 bg-transparent placeholder:text-[#6a6b72] focus:outline-none"
    />
    <div className="flex gap-10">
      <button type="button" aria-label="Send a gift">
        <Icon>
          <path d="M11 14v8H5.5A2.5 2.5 0 0 1 3 19.5V14zM13 14h8v5.5a2.5 2.5 0 0 1-2.5 2.5H13zM3.5 8.500h17A1.500 1.500 0 0 1 22 10v1a1 1 0 0 1-1 1H3a1 1 0 0 1-1-1v-1a1.500 1.500 0 0 1 1.500-1.500z" />
          <path d="M12 9.500C12 5.500 10.500 3 8.300 3 6.500 3 5.200 4.300 5.200 6c0 1.300.4 2.500 1 3.500M12 9.500C12 5.500 13.500 3 15.700 3c1.800 0 3.100 1.300 3.100 3 0 1.300-.4 2.500-1 3.500" fill="none" stroke="currentColor" strokeWidth="2" />
        </Icon>
      </button>
      <button type="button" aria-label="Open GIF picker">
        <Icon>
          <rect x="2" y="2" width="20" height="20" rx="3" />
          <text x="12" y="15.8" textAnchor="middle" fontSize="10" fontWeight="800" fill="#222327">GIF</text>
        </Icon>
      </button>
      <button type="button" aria-label="Open sticker picker">
        <Icon>
          <path d="M5 2h14a3 3 0 0 1 3 3v8.5h-2.5a5.5 5.5 0 0 0-5.5 5.5v3H5a3 3 0 0 1-3-3V5a3 3 0 0 1 3-3Z" />
          <path d="M22 16l-6 6v-3a3 3 0 0 1 3-3z" />
          <g fill="#222327">
            <circle cx="6.5" cy="8.5" r="1.5" />
            <circle cx="17.5" cy="8.5" r="1.5" />
          </g>
          <path d="M8 12c1.5 3 6.5 3 8 0" fill="none" stroke="#222327" strokeWidth="1.8" strokeLinecap="round" />
        </Icon>
      </button>
      <button type="button" aria-label="Select emoji">
        <Icon>
          <circle cx="12" cy="12" r="10" />
          <g fill="#222327">
            <circle cx="7" cy="11.5" r="1.5" />
            <circle cx="17" cy="11.5" r="1.5" />
          </g>
          <path d="M8.5 15c1.5 2.5 5.5 2.5 7 0" fill="none" stroke="#222327" strokeWidth="1.8" strokeLinecap="round" />
        </Icon>
      </button>
      <button type="button" aria-label="Apps">
        <Icon>
          <path d="M4.500 2.100l5.500 1.100a1 1 0 0 1 .8 1.200l-1 5.400a1 1 0 0 1-1.200.8l-5.600-1.200a1 1 0 0 1-.8-1.200l1.100-5.300a1 1 0 0 1 1.200-.8zM16.500 2.800a1.200 1.200 0 0 1 2.100 0l3.300 6.200a1.200 1.200 0 0 1-1 1.800H14.200a1.200 1.200 0 0 1-1-1.800z" />
          <path d="M17.500 13l1.500 3.500L22.500 18 19 19.500 17.500 23 16 19.500 12.500 18l3.500-1.500z" />
          <path d="M6.500 12.900l1.800 1.100 2.100 0 .5 2 1.200 1.800-1.200 1.700-.5 2-2.100.1-1.800 1.100-1.800-1.100-2.100-.1-.5-2L.9 17.800 2.100 16l.5-2 2.100 0z" />
        </Icon>
      </button>
    </div>
  </div>
);

export default function App() {
  return (
    <div className="relative flex h-screen flex-col overflow-hidden border-b border-[#29292c] bg-[#121214] font-['Open_Sans','Noto_Sans',sans-serif] text-[30px] leading-10 text-[#efeff0]">
      <TitleBar />
      <div className="flex min-h-0 flex-1">
        <div className="flex w-[750px] shrink-0 flex-col">
          <div className="flex min-h-0 flex-1">
            <ServerRail />
            <Sidebar />
          </div>
          <UserPanel />
        </div>
        <main className="flex min-w-0 flex-1 flex-col border-t-2 border-[#28282c] bg-[#1a1a1e]">
          <ChannelHeader />
          <Chat />
          <MessageBox />
        </main>
      </div>
      <div className="absolute right-2 bottom-2 flex items-center gap-1 text-2xl leading-9 text-[#dcdcdd]">
        <SiBinance className="size-7" />
        @ HFO-Pulse
      </div>
    </div>
  );
}
